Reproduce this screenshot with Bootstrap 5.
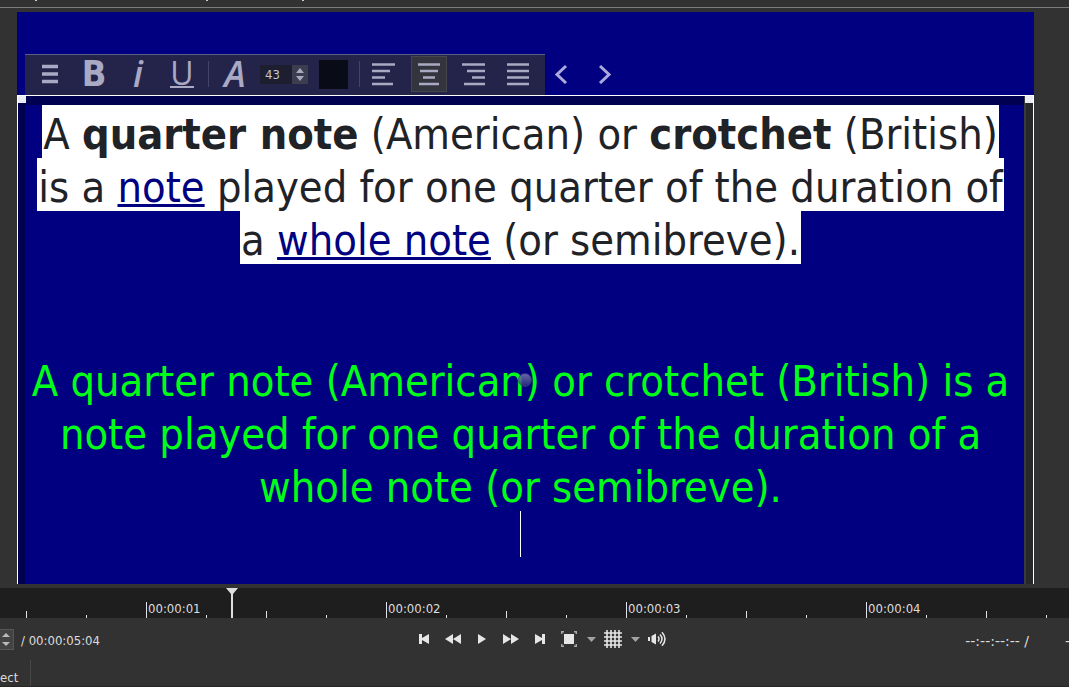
<!DOCTYPE html>
<html lang="en">
<head>
<meta charset="utf-8">
<meta name="viewport" content="width=device-width, initial-scale=1">
<title>Text editor</title>
<link rel="stylesheet" href="https://cdn.jsdelivr.net/npm/bootstrap@5.3.0/dist/css/bootstrap.min.css">
<style>
  body { background: #323232; color: #ddd; font-family: "DejaVu Sans Condensed", "DejaVu Sans", sans-serif; font-size: 13px; line-height: 16px; }
  button { font-family: inherit; }
  .panel-head { height: 8px; border-bottom: 1px solid #7c7c7c; padding-left: 35px; }
  .panel-head i { width: 2px; height: 1px; background: #ccc; }
  .stage { margin: 4px 35px 4px 17px; background: #000080; min-height: 0; }
  .stage-top { padding: 42px 0 0 8px; }
  .format-bar { height: 41px; width: 520px; padding: 0 0 2px 3px; background: #24244b; border-top: 1px solid #5c5c88; }
  .tool { width: 44px; height: 36px; padding: 0; border: 0; background: none; color: #a9a9c4; display: flex; align-items: center; justify-content: center; }
  .glyph { font-size: 36px; line-height: 36px; }
  .glyph-slant { font-family: "Open Sans", "Noto Sans", sans-serif; font-weight: 600; font-style: italic; }
  .glyph-u { font-family: "Open Sans", sans-serif; font-size: 32px; line-height: 26px; border-bottom: 2px solid #a9a9c4; }
  .tool-align { width: 36px; }
  .tool-align.active { background: #33343d; border: 1px solid #45454c; }
  .tool-nav { width: 32px; }
  .nav-pair { gap: 12px; padding-bottom: 2px; }
  .rule { width: 1px; height: 26px; background: #44446a; }
  .spin { width: 48px; height: 19px; background: #1d1f30; }
  .spin input { width: 32px; padding: 0 0 0 5px; border: 0; background: none; color: #c4c4d2; font-size: 13px; line-height: 19px; appearance: textfield; -moz-appearance: textfield; }
  .spin input::-webkit-inner-spin-button { display: none; }
  .spin button { width: 16px; padding: 0; border: 0; background: #3d3d50; line-height: 0; }
  .swatch { width: 29px; height: 29px; padding: 0; border: 0; background: #090b16; }
  .text-frame { border: 1px solid #fff; border-bottom: 0; min-height: 0; }
  .edge-left { width: 7px; background: #000050; }
  .edge-right { width: 9px; background: #262829; border-left: 2px solid #3a3a3c; }
  .handle { width: 8px; height: 7px; background: #ececf4; top: 0; }
  .handle-l { left: 0; } .handle-r { right: 0; }
  .edge-top { height: 9px; background: #000050; }
  .editor { font-size: 43px; line-height: 48px; white-space: nowrap; min-height: 0; padding-right: 8px; }
  .editor .ln { padding-top: 5px; }
  .picked .ln { background: #fff; color: #1f2226; padding-left: 1px; padding-right: 1px; }
  .picked a { color: #000080; text-decoration-thickness: 3px; text-underline-offset: 2px; text-decoration-skip-ink: none; }
  .picked { margin-bottom: 88px; }
  .translated { color: #00ff18; }
  .caret { width: 1px; height: 46px; background: #fff; }
  .pivot { width: 14px; height: 14px; left: 50%; top: 277px; border: 1px solid #3c3c8c; background: linear-gradient(#8080b0, #32327c); opacity: .8; }
  .ruler { height: 30px; background: #1e1e1e; padding-left: 26px; }
  .tick { flex: 0 0 60px; border-left: 1px solid #e4e4e4; height: 3px; }
  .tick-half { height: 7px; }
  .tick-second { height: 16px; padding-left: 1px; line-height: 14px; }
  .playhead { left: 225px; top: 0; }
  .transport { display: grid; grid-template-columns: 1fr auto 1fr; height: 42px; }
  .transport-mid { padding-left: 12px; }
  .tbtn { width: 29px; height: 24px; padding: 0; border: 0; background: none; color: #e6e6e6; display: flex; align-items: center; justify-content: center; }
  .tbtn-drop { width: 15px; color: #a2a2a2; }
  .time-step { width: 14px; height: 21px; padding: 0; background: #434343; border: 1px solid #565656; border-left: 0; line-height: 0; }
  .total { padding: 3px 0 0 7px; }
  .in-out { gap: 36px; padding-top: 3px; font-family: "DejaVu Sans", sans-serif; font-size: 14px; }
  .in-out .cut { width: 4px; }
  .tabs { height: 27px; border-bottom: 1px solid #262626; }
  .tabs button { width: 31px; padding: 9px 0 0; border: 0; border-right: 1px solid #484848; background: none; color: #ddd; text-align: left; font-size: 13px; line-height: 16px; }
</style>
<script src="https://cdn.jsdelivr.net/npm/bootstrap@5.3.0/dist/js/bootstrap.bundle.min.js"></script>
</head>
<body class="vh-100 d-flex flex-column overflow-hidden">
<header class="panel-head d-flex flex-shrink-0">
  <i></i><i style="margin-left:169px"></i><i style="margin-left:94px"></i>
</header>

<main class="stage flex-grow-1 d-flex flex-column">
  <div class="stage-top d-flex flex-shrink-0">
    <div class="format-bar d-flex align-items-center flex-shrink-0" role="toolbar" aria-label="Formatting">
      <button class="tool" aria-label="Menu"><svg width="16" height="20" stroke="currentColor" stroke-width="3.600"><path d="M0 2.500h16M0 10h16M0 17.500h16"/></svg></button>
      <button class="tool glyph fw-bold">B</button>
      <button class="tool glyph glyph-slant">i</button>
      <button class="tool"><span class="glyph-u">U</span></button>
      <span class="rule mx-1"></span>
      <button class="tool glyph glyph-slant">A</button>
      <div class="spin d-flex" style="margin-left:3px">
        <input type="number" value="43" aria-label="Font size">
        <button aria-label="Change size"><svg width="16" height="19" fill="#a9a9bd"><path d="M4 8l4-5 4 5zM4 11h8l-4 5z"/></svg></button>
      </div>
      <button class="swatch" style="margin-left:11px" aria-label="Text colour"></button>
      <span class="rule" style="margin-left:11px"></span>
      <div class="d-flex" style="gap:9px;margin-left:6px">
        <button class="tool tool-align" aria-label="Align left"><svg width="24" height="24" stroke="currentColor" stroke-width="2.600"><path d="M0 2.500h23M0 9h18M0 15.500h13M0 22h21"/></svg></button>
        <button class="tool tool-align active" aria-label="Align centre"><svg width="24" height="24" stroke="currentColor" stroke-width="2.600"><path d="M1 2.500h22M3 9h18M6 15.500h12M2 22h20"/></svg></button>
        <button class="tool tool-align" aria-label="Align right"><svg width="24" height="24" stroke="currentColor" stroke-width="2.600"><path d="M0 2.500h23M5 9h18M10 15.500h13M2 22h21"/></svg></button>
        <button class="tool tool-align" aria-label="Justify"><svg width="24" height="24" stroke="currentColor" stroke-width="2.600"><path d="M0 2.500h22M0 9h22M0 15.500h22M0 22h22"/></svg></button>
      </div>
    </div>
    <div class="nav-pair d-flex align-items-center">
      <button class="tool tool-nav" aria-label="Previous"><svg width="14" height="20" fill="none" stroke="#a9a9dc" stroke-width="3"><path d="M12 2L3 10.500l9 8.500"/></svg></button>
      <button class="tool tool-nav" aria-label="Next"><svg width="14" height="20" fill="none" stroke="#a9a9dc" stroke-width="3"><path d="M2 2l9 8.500L2 19"/></svg></button>
    </div>
  </div>

  <section class="text-frame position-relative flex-grow-1 d-flex">
    <div class="edge-left"></div>
    <div class="flex-grow-1 d-flex flex-column position-relative">
      <div class="edge-top flex-shrink-0"></div>
      <div class="editor d-flex flex-column align-items-center overflow-hidden">
        <div class="picked d-flex flex-column align-items-center">
          <span class="ln">A <b>quarter note</b> (American) or <b>crotchet</b> (British)</span>
          <span class="ln">is a <a href="#">note</a> played for one quarter of the duration of</span>
          <span class="ln">a <a href="#">whole note</a> (or semibreve).</span>
        </div>
        <div class="translated d-flex flex-column align-items-center">
          <span class="ln">A quarter note (American) or crotchet (British) is a</span>
          <span class="ln">note played for one quarter of the duration of a</span>
          <span class="ln">whole note (or semibreve).</span>
        </div>
        <div class="caret"></div>
      </div>
      <span class="pivot position-absolute rounded-circle translate-middle-x"></span>
    </div>
    <div class="edge-right"></div>
    <span class="handle handle-l position-absolute"></span>
    <span class="handle handle-r position-absolute"></span>
  </section>
</main>

<div class="ruler d-flex align-items-end position-relative overflow-hidden flex-shrink-0">
  <span class="tick tick-half"></span><span class="tick"></span>
  <span class="tick tick-second">00:00:01</span><span class="tick"></span><span class="tick tick-half"></span><span class="tick"></span>
  <span class="tick tick-second">00:00:02</span><span class="tick"></span><span class="tick tick-half"></span><span class="tick"></span>
  <span class="tick tick-second">00:00:03</span><span class="tick"></span><span class="tick tick-half"></span><span class="tick"></span>
  <span class="tick tick-second">00:00:04</span><span class="tick"></span><span class="tick tick-half"></span><span class="tick"></span>
  <svg class="playhead position-absolute" width="14" height="30" fill="#dedede"><path d="M1 0h12L8 6v24H6V6z"/></svg>
</div>

<div class="transport flex-shrink-0 align-items-center">
  <div class="d-flex align-items-center">
    <button class="time-step" aria-label="Step time"><svg width="13" height="19" fill="#bbb"><path d="M2 7l4-4 4 4zM2 12h8l-4 4z"/></svg></button>
    <span class="total">/ 00:00:05:04</span>
  </div>
  <div class="transport-mid d-flex align-items-center">
    <button class="tbtn" aria-label="Skip back"><svg width="10" height="10" fill="currentColor"><path d="M0 0h3v4l7-4v10L3 6v4H0z"/></svg></button>
    <button class="tbtn" aria-label="Rewind"><svg width="16" height="10" fill="currentColor"><path d="M8 0v10L0 5zM16 0v10L8 5z"/></svg></button>
    <button class="tbtn" aria-label="Play"><svg width="8" height="10" fill="currentColor"><path d="M0 0l8 5-8 5z"/></svg></button>
    <button class="tbtn" aria-label="Fast forward"><svg width="16" height="10" fill="currentColor"><path d="M0 0l8 5-8 5zM8 0l8 5-8 5z"/></svg></button>
    <button class="tbtn" aria-label="Skip forward"><svg width="10" height="10" fill="currentColor"><path d="M10 0H7v4L0 0v10l7-4v4h3z"/></svg></button>
    <button class="tbtn" aria-label="Zoom"><svg width="16" height="16"><path fill="#e6e6e6" d="M3 3h10v10H3z"/><path fill="none" stroke="#a8a8a8" stroke-width="1.500" d="M.7 3V.7H3M13 .7h2.300V3M15.300 13v2.300H13M3 15.300H.7V13"/></svg></button>
    <button class="tbtn tbtn-drop" aria-label="Zoom options"><svg width="9" height="5" fill="currentColor"><path d="M0 0h9L4.500 5z"/></svg></button>
    <button class="tbtn" aria-label="Grid"><svg width="18" height="18" stroke="currentColor" stroke-width="1.600"><path d="M3 0v18M7 0v18M11 0v18M15 0v18M0 3h18M0 7h18M0 11h18M0 15h18"/></svg></button>
    <button class="tbtn tbtn-drop" aria-label="Grid options"><svg width="9" height="5" fill="currentColor"><path d="M0 0h9L4.500 5z"/></svg></button>
    <button class="tbtn" aria-label="Volume"><svg width="18" height="16" fill="none" stroke="#e6e6e6" stroke-width="1.500"><path fill="#e6e6e6" stroke="none" d="M0 6h2v4H0zM3.500 5L8 2.500v11L3.500 11z"/><path d="M10 5.500q2 2.500 0 5M12 3.500q4 4.500 0 9M14 1.200q6 6.800 0 13.600"/></svg></button>
  </div>
  <div class="in-out d-flex justify-content-end text-nowrap">
    <span>--:--:--:-- /</span><span class="cut">-</span>
  </div>
</div>

<div class="tabs d-flex flex-shrink-0"><button>ect</button></div>
</body>
</html>
